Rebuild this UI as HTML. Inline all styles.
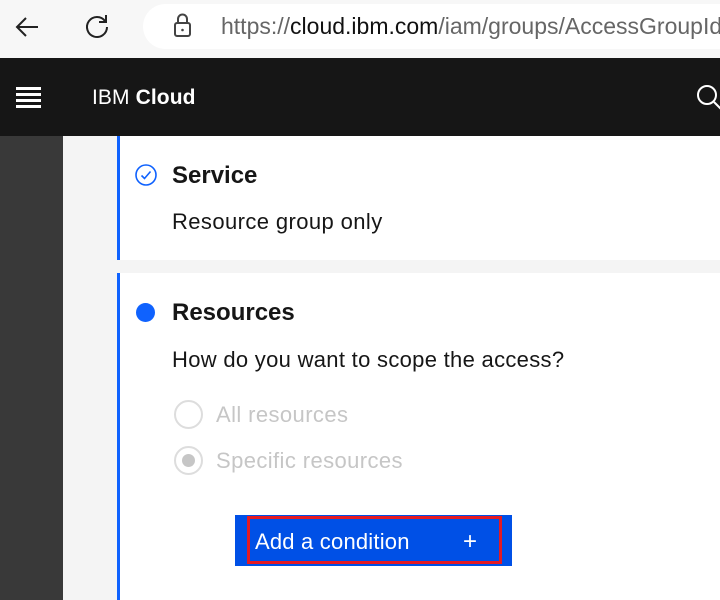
<!DOCTYPE html>
<html><head><style>
*{margin:0;padding:0;box-sizing:border-box}
body{width:720px;height:600px;overflow:hidden;position:relative;background:#f4f4f4;font-family:"Liberation Sans",sans-serif}
.abs{position:absolute;white-space:nowrap}
.t{font-size:22px;letter-spacing:0.4px}
</style></head><body>
<div class="abs" style="left:0;top:0;width:720px;height:58px;background:#f7f7f7"></div>
<svg class="abs" style="left:12px;top:12px" width="30" height="30" viewBox="0 0 30 30"><path d="M26 15H5M14 6L5 15L14 24" stroke="#222" stroke-width="2" fill="none"/></svg>
<svg class="abs" style="left:82px;top:11px" width="30" height="30" viewBox="0 0 30 30"><path d="M23 10A10 10 0 1 0 25 16" stroke="#222" stroke-width="2" fill="none"/><path d="M24 4V11H17" stroke="#222" stroke-width="2" fill="none"/></svg>
<div class="abs" style="left:143px;top:4px;width:600px;height:45px;background:#fff;border-radius:23px"></div>
<svg class="abs" style="left:172px;top:13px" width="22" height="26" viewBox="0 0 22 26"><rect x="3" y="10" width="15" height="13" rx="2" stroke="#444" stroke-width="2" fill="none"/><path d="M6 10V6a4.5 4.5 0 0 1 9 0v4" stroke="#444" stroke-width="2" fill="none"/><circle cx="10.5" cy="17" r="1.3" fill="#444"/></svg>
<div class="abs" style="left:221px;top:13px;font-size:23px;color:#666">https://<span style="color:#111">cloud.ibm.com</span>/iam/groups/AccessGroupId-</div>
<div class="abs" style="left:0;top:58px;width:720px;height:78px;background:#161616"></div>
<div class="abs" style="left:16px;top:87px;width:25px;height:3px;background:#fff;box-shadow:0 6px 0 #fff,0 12px 0 #fff,0 18px 0 #fff"></div>
<div class="abs" style="left:92px;top:86px;font-size:21px;color:#fff;letter-spacing:0.1px">IBM <b>Cloud</b></div>
<svg class="abs" style="left:694px;top:82px" width="30" height="30" viewBox="0 0 30 30"><circle cx="13" cy="13" r="9" stroke="#fff" stroke-width="2" fill="none"/><path d="M20 20L28 28" stroke="#fff" stroke-width="2"/></svg>
<div class="abs" style="left:0;top:136px;width:63px;height:464px;background:#393939"></div>
<div class="abs" style="left:117px;top:136px;width:603px;height:124px;background:#fff;border-left:3px solid #0f62fe"></div>
<div class="abs" style="left:117px;top:273px;width:603px;height:327px;background:#fff;border-left:3px solid #0f62fe"></div>
<svg class="abs" style="left:134px;top:163px" width="24" height="24" viewBox="0 0 24 24"><circle cx="12" cy="12" r="10" stroke="#0f62fe" stroke-width="1.6" fill="none"/><path d="M7.5 12.5L10.5 15.5L16.5 8.5" stroke="#0f62fe" stroke-width="1.6" fill="none"/></svg>
<div class="abs" style="left:172px;top:162px;font-size:24px;font-weight:bold;color:#161616">Service</div>
<div class="abs t" style="left:172px;top:209px;color:#161616">Resource group only</div>
<div class="abs" style="left:136px;top:303px;width:19px;height:19px;border-radius:50%;background:#0f62fe"></div>
<div class="abs" style="left:172px;top:299px;font-size:24px;font-weight:bold;color:#161616">Resources</div>
<div class="abs t" style="left:172px;top:347px;color:#161616;letter-spacing:0.3px">How do you want to scope the access?</div>
<div class="abs" style="left:174px;top:400px;width:29px;height:29px;border-radius:50%;border:2px solid #ddd"></div>
<div class="abs t" style="left:216px;top:402px;color:#c6c6c6">All resources</div>
<div class="abs" style="left:174px;top:446px;width:29px;height:29px;border-radius:50%;border:2px solid #ddd"></div>
<div class="abs" style="left:182px;top:454px;width:13px;height:13px;border-radius:50%;background:#c6c6c6"></div>
<div class="abs t" style="left:216px;top:448px;color:#c6c6c6">Specific resources</div>
<div class="abs" style="left:235px;top:515px;width:277px;height:51px;background:#0050e6"></div>
<div class="abs" style="left:247px;top:516px;width:255px;height:48px;border:3px solid #e41a23"></div>
<div class="abs" style="left:255px;top:529px;color:#fff;font-size:22px;letter-spacing:0.2px">Add a condition</div>
<div class="abs" style="left:463px;top:528px;font-size:24px;color:#fff">+</div>
</body></html>
